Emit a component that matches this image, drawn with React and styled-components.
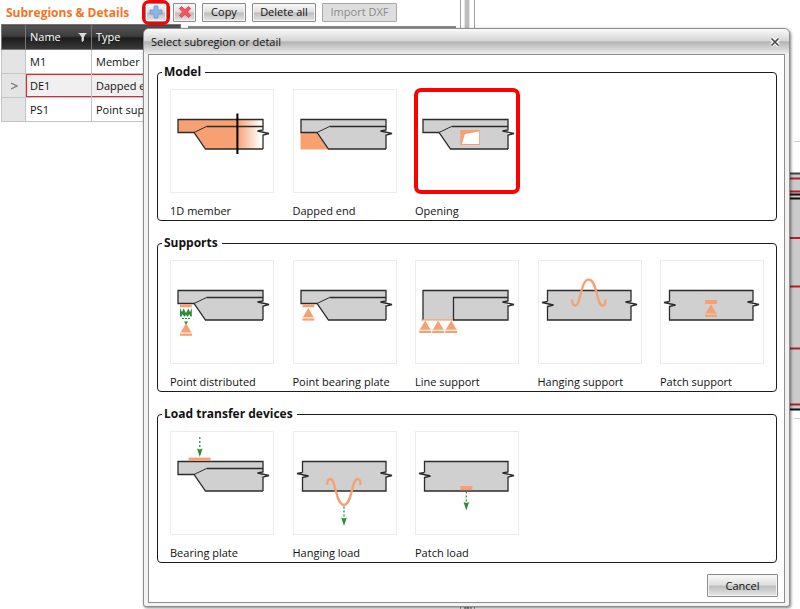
import { useState } from "react";
import styled, { createGlobalStyle, css } from "styled-components";

const GlobalStyle = createGlobalStyle`
  * {
    box-sizing: border-box;
  }

  body {
    margin: 0;
    background: #fff;
    color: #111;
    font-family: "Open Sans", "Noto Sans", sans-serif;
    font-size: 11px;
    overflow: hidden;
  }

  button {
    font: inherit;
    color: inherit;
  }
`;

const Page = styled.div`
  position: relative;
  display: grid;
  grid-template-columns: 456px 20px 1fr;
  min-height: 100vh;
`;

const Toolbar = styled.header`
  display: flex;
  align-items: center;
  gap: 6px;
  height: 24px;
  padding-left: 6px;
`;

const Heading = styled.h1`
  width: 133px;
  margin: 0;
  color: #f27421;
  font-size: 12px;
  font-weight: bold;
  white-space: nowrap;
`;

const glossy = css`
  border: 1px solid #8c8c8c;
  border-radius: 1px;
  background: linear-gradient(#fafafa 0%, #dedede 48%, #bdbdbd 52%, #e6e6e6 100%);
  box-shadow: inset 0 0 0 1px #f4f4f4;
`;

const ToolButton = styled.button`
  ${glossy}
  position: relative;
  display: flex;
  align-items: center;
  justify-content: center;
  width: ${(props) => props.$width}px;
  height: 19px;
  padding: 0;
  font-weight: 500;
  line-height: 16px;
  white-space: nowrap;

  &:disabled {
    border-color: #a8a8a8;
    background: #dedede;
    box-shadow: none;
    color: #8a8a8a;
    font-weight: 400;
  }
`;

const Highlight = styled.span`
  position: absolute;
  inset: ${(props) => props.$inset}px;
  border: ${(props) => props.$stroke}px solid #f00;
  border-radius: 7px;
  pointer-events: none;
`;

const Panels = styled.div`
  display: flex;
  gap: 7px;
`;

const Table = styled.table`
  width: 180px;
  margin-left: 1px;
  border-collapse: collapse;
  table-layout: fixed;
  border: 1px solid #8a8a8a;
  line-height: 16px;
`;

const HeadCell = styled.th`
  width: ${(props) => props.$width};
  height: 25px;
  padding: 0 4px;
  border: 1px solid #777;
  background: linear-gradient(#555 0%, #3c3c3c 45%, #1c1c1c 52%, #3a3a3a 100%);
  color: #fff;
  font-weight: normal;
  text-align: left;
`;

const HeadLabel = styled.span`
  display: flex;
  align-items: center;
  justify-content: space-between;
`;

const Cell = styled.td`
  height: 24px;
  padding: 0 4px;
  border: 1px solid #c4c4c4;
  white-space: nowrap;
  overflow: hidden;
`;

const Gutter = styled(Cell)`
  background: #e4e4e4;
  text-align: center;
`;

const Row = styled.tr`
  background: #fff;

  ${(props) =>
    props.$selected &&
    css`
      ${Cell}:not(${Gutter}) {
        background: #f0f0f0;
        box-shadow: inset 0 1px #e8232c, inset 0 -1px #e8232c;
      }

      ${Gutter} + ${Cell} {
        box-shadow: inset 0 1px #e8232c, inset 0 -1px #e8232c, inset 1px 0 #e8232c !important;
      }
    `}
`;

const SidePanel = styled.div`
  flex: 1;
  margin-top: 2px;
  border-top: 2px solid #8a8a8a;
`;

const Splitter = styled.div`
  display: flex;
  align-items: flex-end;
  justify-content: center;
  margin: 0 1px 0 4px;
  border: solid #a0a0a0;
  border-width: 0 1px;
  background: linear-gradient(90deg, #fff 25%, #bdbdbd 30%, #bdbdbd 62%, #fff 68%);
`;

const Drawing = styled.svg`
  display: block;
  width: 100%;
  height: 609px;
`;

const Dialog = styled.section`
  position: absolute;
  top: 28px;
  left: 143px;
  right: 10px;
  padding: 0 4px 3px;
  border: 1px solid #8e8e8e;
  border-radius: 6px 6px 3px 3px;
  background: #f2f2f2;
  box-shadow: 1px 1px 3px rgba(0, 0, 0, 0.5);
`;

const TitleBar = styled.header`
  display: flex;
  align-items: center;
  justify-content: space-between;
  height: 25px;
  margin: 0 -4px;
  padding: 0 7px;
  border-radius: 5px 5px 0 0;
  background: linear-gradient(#fafafa 0%, #d6d6d6 46%, #b4b4b4 52%, #ededed 100%);
`;

const Title = styled.h2`
  margin: 0;
  font-size: 11px;
  font-weight: normal;
  line-height: 16px;
`;

const CloseButton = styled.button`
  display: flex;
  padding: 2px;
  border: 0;
  background: none;
`;

const Body = styled.div`
  display: flex;
  flex-direction: column;
  gap: 13px;
  padding: 8px 7px 5px 8px;
  border: 1px solid #8e8e8e;
  background: #fff;
`;

const Group = styled.fieldset`
  min-width: 0;
  margin: 0;
  padding: 8px 12px 1px;
  border: 1px solid #1c1c1c;
  border-radius: 4px;
`;

const Legend = styled.legend`
  margin-left: -8px;
  padding: 0 4px 0 2px;
  font-size: 12px;
  font-weight: bold;
  line-height: 18px;
`;

const Tiles = styled.div`
  display: grid;
  grid-template-columns: repeat(5, 104px);
  justify-content: space-between;
`;

const TileButton = styled.button`
  display: flex;
  flex-direction: column;
  gap: 10px;
  padding: 0;
  border: 0;
  background: none;
  font-weight: ${(props) => (props.$strong ? 500 : 400)};
  line-height: 16px;
  text-align: left;
  white-space: nowrap;
`;

const Preview = styled.span`
  position: relative;
  display: block;
  height: 104px;

  svg {
    display: block;
    border: 1px solid #ececec;
  }
`;

const Footer = styled.footer`
  display: flex;
  justify-content: flex-end;
  margin: -2px -1px 0 0;
`;

const CancelButton = styled.button`
  ${glossy}
  width: 71px;
  height: 23px;
  padding: 0;
  line-height: 16px;
`;

const ORANGE = "#f7a072";
const GREEN = "#2e8b37";
const GREY = "#d0d0d0";
const INK = "#2b2b2b";

// Both break marks are a short zig-zag through the vertical edge.
const rightEdge = "V41 L87.5 42 L99 44.5 L93 46";
const leftEdge = "V46.5 L15.5 45 L4 42.5 L9.5 41.5";

function Beam({ fill = GREY, bottomFill }) {
  return (
    <>
      <path d="M8 30.5 H93 V60 H35.5 L24 43.5 H8 Z" fill={bottomFill || fill} />
      <g fill="none" stroke={INK} strokeWidth="1.3">
        <path d={`M93 60 H35.5 L24 43.5 H8 V30.5 H93 ${rightEdge} V60`} />
        <path d="M24 43.5 L36.5 37.5" strokeWidth="1" />
        <path d="M36.5 37.5 H93" />
      </g>
    </>
  );
}

function Slab() {
  return (
    <>
      <path d="M9.5 30.5 H93 V60 H9.5 Z" fill={GREY} />
      <path
        d={`M9.5 41.5 V30.5 H93 ${rightEdge} V60 H9.5 ${leftEdge}`}
        fill="none"
        stroke={INK}
        strokeWidth="1.3"
      />
    </>
  );
}

function Support({ x, y }) {
  return (
    <g fill={ORANGE}>
      <path d={`M${x} ${y} L${x + 4.7} ${y + 8} L${x + 6} ${y + 9.3} H${x - 6} L${x - 4.7} ${y + 8} Z`} />
      <rect x={x - 6} y={y + 10.4} width="12" height="2.2" />
    </g>
  );
}

function Arrow({ x, y, length }) {
  const head = y + length - 8.5;
  return (
    <>
      <path d={`M${x} ${y} V${head}`} stroke={GREEN} strokeWidth="1.3" strokeDasharray="2 2" />
      <path d={`M${x - 2.8} ${head} L${x} ${head + 1} L${x + 2.8} ${head} L${x} ${head + 8.5} Z`} fill={GREEN} />
    </>
  );
}

const pictures = {
  member: (
    <>
      <defs>
        <linearGradient id="fade" gradientUnits="userSpaceOnUse" x1="67" y1="0" x2="91" y2="0">
          <stop offset="0" stopColor={ORANGE} />
          <stop offset="1" stopColor="#fff" />
        </linearGradient>
      </defs>
      <Beam bottomFill="url(#fade)" />
      <path d="M67.4 24.5 V65" stroke="#000" strokeWidth="2" />
    </>
  ),
  dapped: (
    <>
      <path d="M7.5 44 H24 L35.5 60.5 H7.5 Z" fill={ORANGE} />
      <Beam />
    </>
  ),
  opening: (
    <>
      <Beam />
      <path d="M45.3 41 H64.8 V56 H45.3 Z" fill={ORANGE} />
      <path d="M47 55 L49.5 46 Q50 45 51.5 44.7 L64 42.5 V55 Z" fill="#fff" />
    </>
  ),
  pointDistributed: (
    <>
      <Beam />
      <rect x="10" y="44.3" width="11.8" height="3" fill={ORANGE} />
      <path
        d="M10 48 L12 52 L13.6 48.5 L16 53 L18.4 48.5 L20 52 L21.8 48 V56.5 H20.4 L19.3 54 L18 56.5 H17 L16 54.5 L15 56.5 H14 L12.7 54 L11.6 56.5 H10 Z"
        fill={GREEN}
      />
      <path d="M12 58.5 H20" stroke={GREEN} strokeWidth="1" strokeDasharray="2 1" />
      <path d="M14 61.5 H18 L16 65 Z" fill={GREEN} />
      <Support x={16} y={63.2} />
    </>
  ),
  pointBearing: (
    <>
      <Beam />
      <rect x="9.5" y="44.3" width="11.8" height="3" fill={ORANGE} />
      <Support x={15.3} y={48} />
    </>
  ),
  line: (
    <>
      <path d="M8 30.5 H93 V60 H8 Z" fill={GREY} />
      <g fill="none" stroke={INK} strokeWidth="1.3">
        <path d={`M8 60 V30.5 H93 ${rightEdge} V60 H38.5 V37.5 H93`} />
      </g>
      <path d="M6 60 H38" stroke={ORANGE} strokeWidth="1.2" />
      <Support x={10.2} y={60.4} />
      <Support x={23.2} y={60.4} />
      <Support x={36.2} y={60.4} />
    </>
  ),
  hangingSupport: (
    <>
      <Slab />
      <path
        d="M34.2 39.5 C34 47 38.8 47.2 40.6 41.5 C43.5 33 44.5 19.7 50.8 19.7 C57 19.7 58 33 61 41.5 C63 47.2 68 47 67.4 39.5"
        fill="none"
        stroke={ORANGE}
        strokeWidth="2.3"
      />
    </>
  ),
  patchSupport: (
    <>
      <Slab />
      <rect x="45" y="40" width="12" height="4" fill={ORANGE} />
      <Support x={51} y={44.3} />
    </>
  ),
  bearingPlate: (
    <>
      <Beam />
      <rect x="18.5" y="26.6" width="22" height="3.2" fill={ORANGE} />
      <Arrow x={29.8} y={6} length={20} />
    </>
  ),
  hangingLoad: (
    <>
      <Slab />
      <path
        d="M34.2 54 C34 46.5 38.8 46.3 40.6 52 C43.5 60.5 44.8 74 51 74 C57 74 58 60.5 61 52 C63 46.3 68 46.5 67.4 54"
        fill="none"
        stroke={ORANGE}
        strokeWidth="2.3"
      />
      <Arrow x={51} y={75.5} length={19.5} />
    </>
  ),
  patchLoad: (
    <>
      <Slab />
      <rect x="45.3" y="55" width="12" height="4.2" fill={ORANGE} />
      <Arrow x={51.3} y={60.5} length={19} />
    </>
  ),
};

const groups = [
  {
    name: "Model",
    items: [
      { id: "member", label: "1D member" },
      { id: "dapped", label: "Dapped end" },
      { id: "opening", label: "Opening" },
    ],
  },
  {
    name: "Supports",
    items: [
      { id: "pointDistributed", label: "Point distributed" },
      { id: "pointBearing", label: "Point bearing plate" },
      { id: "line", label: "Line support" },
      { id: "hangingSupport", label: "Hanging support" },
      { id: "patchSupport", label: "Patch support" },
    ],
  },
  {
    name: "Load transfer devices",
    items: [
      { id: "bearingPlate", label: "Bearing plate", strong: true },
      { id: "hangingLoad", label: "Hanging load" },
      { id: "patchLoad", label: "Patch load" },
    ],
  },
];

const rows = [
  { name: "M1", type: "Member" },
  { name: "DE1", type: "Dapped end" },
  { name: "PS1", type: "Point support" },
];

function Subregions({ active, onSelect }) {
  return (
    <Table>
      <thead>
        <tr>
          <HeadCell $width="24px" />
          <HeadCell $width="66px">
            <HeadLabel>
              Name
              <svg width="9" height="10" viewBox="0 0 9 10">
                <path d="M0.5 1.5 H8.5 M1 1 L4 5 V9.5 L5.5 8.5 V5 L8 1" fill="#ddd" stroke="#ddd" strokeWidth="0.8" />
              </svg>
            </HeadLabel>
          </HeadCell>
          <HeadCell $width="auto">Type</HeadCell>
        </tr>
      </thead>
      <tbody>
        {rows.map((row) => (
          <Row key={row.name} $selected={row.name === active} onClick={() => onSelect(row.name)}>
            <Gutter>
              {row.name === active && (
                <svg width="8" height="8" viewBox="0 0 8 8">
                  <path d="M1 1 L7 4 L1 7" fill="none" stroke="#777" strokeWidth="1.3" />
                </svg>
              )}
            </Gutter>
            <Cell>{row.name}</Cell>
            <Cell>{row.type}</Cell>
          </Row>
        ))}
      </tbody>
    </Table>
  );
}

function SelectDialog({ selected, onSelect }) {
  return (
    <Dialog role="dialog" aria-labelledby="dialog-title">
      <TitleBar>
        <Title id="dialog-title">Select subregion or detail</Title>
        <CloseButton aria-label="Close">
          <svg width="10" height="10" viewBox="0 0 10 10">
            <path d="M1.5 1.5 L8.5 8.5 M8.5 1.5 L1.5 8.5" stroke="#fff" strokeWidth="4" />
            <path d="M1.5 1.5 L8.5 8.5 M8.5 1.5 L1.5 8.5" stroke="#4a4a4a" strokeWidth="1.7" />
          </svg>
        </CloseButton>
      </TitleBar>
      <Body>
        {groups.map((group) => (
          <Group key={group.name}>
            <Legend>{group.name}</Legend>
            <Tiles>
              {group.items.map((item) => (
                <TileButton key={item.id} $strong={item.strong} onClick={() => onSelect(item.id)}>
                  <Preview>
                    <svg width="104" height="104" viewBox="1 1 102 102">
                      {pictures[item.id]}
                    </svg>
                    {item.id === selected && <Highlight $inset={-1} $stroke={4} />}
                  </Preview>
                  {item.label}
                </TileButton>
              ))}
            </Tiles>
          </Group>
        ))}
        <Footer>
          <CancelButton>Cancel</CancelButton>
        </Footer>
      </Body>
    </Dialog>
  );
}

function Section() {
  return (
    <Drawing viewBox="0 0 324 609" preserveAspectRatio="none">
      <path d="M318 141.5 H324 M318 418.5 H324" stroke="#ccc" />
      <rect y="173" width="324" height="236" fill="#cbcbcb" />
      <path d="M0 173.5 H324" stroke="#444" strokeWidth="2" />
      <path d="M0 194.5 H324 M0 198.5 H324 M0 409.5 H324" stroke="#111" strokeWidth="2" />
      <path
        d="M0 178.5 H324 M0 191.5 H324 M0 238 H324 M0 286.5 H324 M0 348.5 H324 M0 404.5 H324"
        stroke="#b3202a"
        strokeWidth="2"
      />
    </Drawing>
  );
}

const App = () => {
  const [row, setRow] = useState("DE1");
  const [selected, setSelected] = useState("opening");

  return (
    <>
      <GlobalStyle />
      <Page>
        <div>
          <Toolbar>
            <Heading>Subregions &amp; Details</Heading>
            <ToolButton $width={22} aria-label="Add">
              <svg width="14" height="14" viewBox="0 0 14 14">
                <path d="M5 1 H9 V5 H13 V9 H9 V13 H5 V9 H1 V5 H5 Z" fill="#8fb6e2" stroke="#6a98cd" strokeWidth="0.8" />
              </svg>
              <Highlight $inset={-4} $stroke={3} />
            </ToolButton>
            <ToolButton $width={23} aria-label="Delete">
              <svg width="14" height="14" viewBox="0 0 14 14">
                <path
                  d="M3.5 1.5 L7 4.6 L10.5 1.5 L12.7 3.5 L9.4 7 L12.7 10.5 L10.5 12.5 L7 9.4 L3.5 12.5 L1.3 10.5 L4.6 7 L1.3 3.5 Z"
                  fill="#f4545c"
                  stroke="#e03d48"
                  strokeWidth="0.8"
                />
              </svg>
            </ToolButton>
            <ToolButton $width={44}>Copy</ToolButton>
            <ToolButton $width={64}>Delete all</ToolButton>
            <ToolButton $width={75} disabled>
              Import DXF
            </ToolButton>
          </Toolbar>
          <Panels>
            <Subregions active={row} onSelect={setRow} />
            <SidePanel />
          </Panels>
        </div>
        <Splitter>
          <svg width="8" height="3" viewBox="0 0 8 3">
            <path d="M1 0 V3 M4 0 V3 M7 0 V3" stroke="#666" />
          </svg>
        </Splitter>
        <Section />
        <SelectDialog selected={selected} onSelect={setSelected} />
      </Page>
    </>
  );
};

export default App;
